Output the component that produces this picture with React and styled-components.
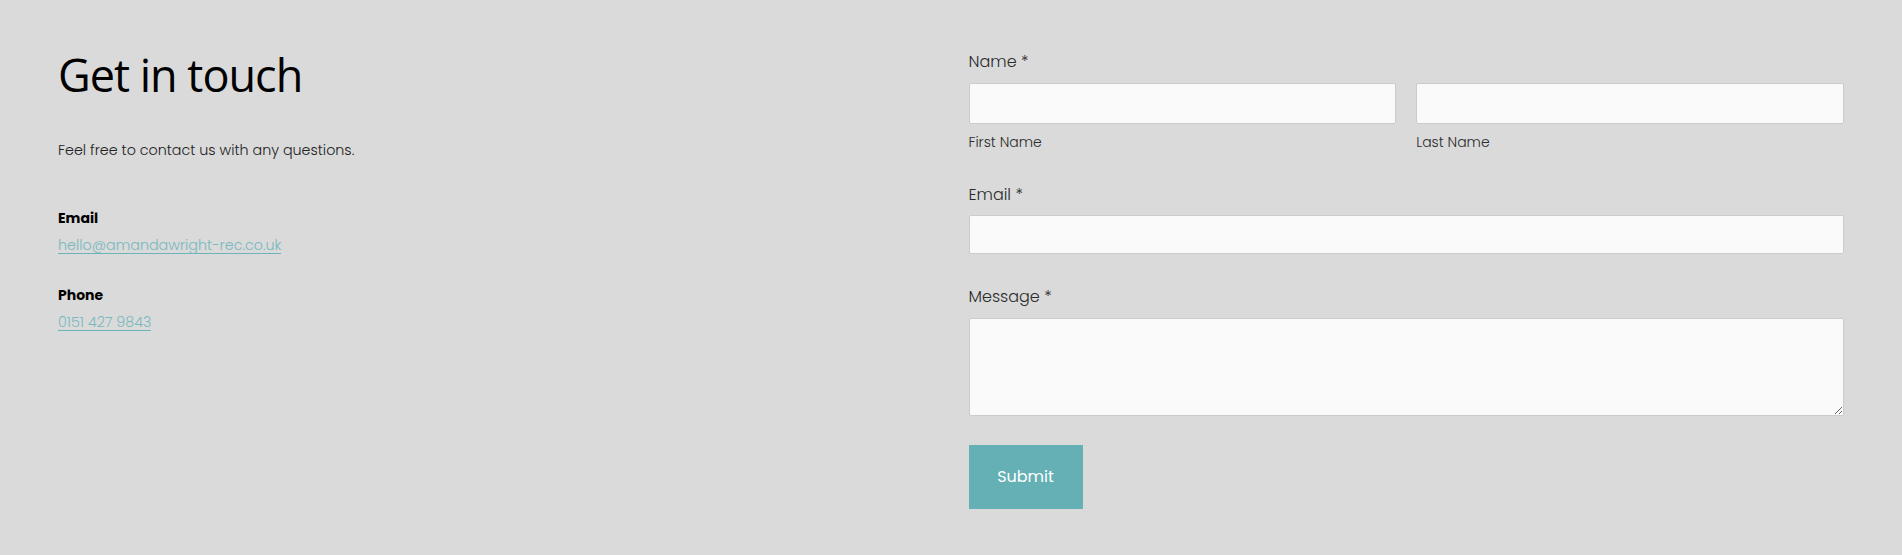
import React from "react"
import styled, { createGlobalStyle } from "styled-components"

const GlobalStyle = createGlobalStyle`
   html, body {
      margin: 0;
      padding: 0;
      background: #dadada;
   }
   body {
      font-family: "Poppins", "Liberation Sans", Arial, sans-serif;
      color: #222222;
   }
   * {
      box-sizing: border-box;
   }
`

function App() {
   return (
      <>
         <GlobalStyle />
         <Section>
            <Intro>
               <Title>Get in touch</Title>
               <Lead>Feel free to contact us with any questions.</Lead>
               <Contact>
                  <ContactLabel>Email</ContactLabel>
                  <ContactLink href="#email">hello@amandawright-rec.co.uk</ContactLink>
               </Contact>
               <Contact>
                  <ContactLabel>Phone</ContactLabel>
                  <ContactLink href="#phone">0151 427 9843</ContactLink>
               </Contact>
            </Intro>
            <Form onSubmit={(e) => e.preventDefault()}>
               <Field $gap="28px">
                  <Label>Name *</Label>
                  <NameRow>
                     <div>
                        <Input type="text" aria-label="First Name" />
                        <SubLabel>First Name</SubLabel>
                     </div>
                     <div>
                        <Input type="text" aria-label="Last Name" />
                        <SubLabel>Last Name</SubLabel>
                     </div>
                  </NameRow>
               </Field>
               <Field>
                  <Label>Email *</Label>
                  <Input type="email" aria-label="Email" $height="39px" />
               </Field>
               <Field>
                  <Label>Message *</Label>
                  <TextArea aria-label="Message" />
               </Field>
               <SubmitButton type="submit">Submit</SubmitButton>
            </Form>
         </Section>
      </>
   )
}
export default App

const Section = styled.section`
   display: grid;
   grid-template-columns: 1fr 1fr;
   column-gap: 35px;
   padding: 46px 58px;
`
const Intro = styled.div`
   display: flex;
   flex-direction: column;
   align-items: flex-start;
`
const Title = styled.h2`
   margin: 0;
   font-family: "Open Sans", "Noto Sans", sans-serif;
   font-weight: 400;
   font-size: 45px;
   letter-spacing: -1px;
   line-height: 58px;
   color: #000000;
`
const Lead = styled.p`
   margin: 34px 0 0;
   font-size: 14.3px;
   font-weight: 300;
   line-height: 24px;
   color: #222222;
`
const Contact = styled.div`
   display: flex;
   flex-direction: column;
   align-items: flex-start;
   margin-top: 44px;
   & + & {
      margin-top: 29px;
   }
`
const ContactLabel = styled.span`
   font-size: 14px;
   font-weight: 700;
   line-height: 24px;
   color: #000000;
`
const ContactLink = styled.a`
   display: inline-block;
   margin-top: 7px;
   font-size: 14.3px;
   font-weight: 300;
   line-height: 16px;
   color: #78b9bf;
   text-decoration: none;
   border-bottom: 1px solid #6db4ba;
`
const Form = styled.form`
   display: flex;
   flex-direction: column;
   align-items: flex-start;
   padding-top: 2px;
`
const Field = styled.div`
   width: 100%;
   display: flex;
   flex-direction: column;
   margin-bottom: ${(p) => p.$gap || "29px"};
`
const Label = styled.label`
   font-size: 16px;
   font-weight: 300;
   line-height: 27px;
   color: #2b2b2b;
   margin-bottom: 7.5px;
`
const NameRow = styled.div`
   display: grid;
   grid-template-columns: 1fr 1fr;
   column-gap: 20px;
`
const Input = styled.input`
   display: block;
   width: 100%;
   height: ${(p) => p.$height || "41px"};
   margin: 0;
   padding: 8px 12px;
   background: #fafafa;
   border: 1px solid #cccccc;
   border-radius: 2px;
   font-family: inherit;
   font-size: 15px;
   outline: none;
`
const SubLabel = styled.div`
   margin-top: 7px;
   font-size: 14px;
   font-weight: 300;
   line-height: 22px;
   color: #2b2b2b;
`
const TextArea = styled.textarea`
   display: block;
   width: 100%;
   height: 98px;
   margin: 0;
   padding: 8px 12px;
   background: #fafafa;
   border: 1px solid #cccccc;
   border-radius: 2px;
   font-family: inherit;
   font-size: 15px;
   outline: none;
   resize: vertical;
`
const SubmitButton = styled.button`
   width: 114px;
   height: 64px;
   border: none;
   border-radius: 0;
   background: #64b0b5;
   color: #ffffff;
   font-family: inherit;
   font-size: 16px;
   font-weight: 400;
   cursor: pointer;
`
